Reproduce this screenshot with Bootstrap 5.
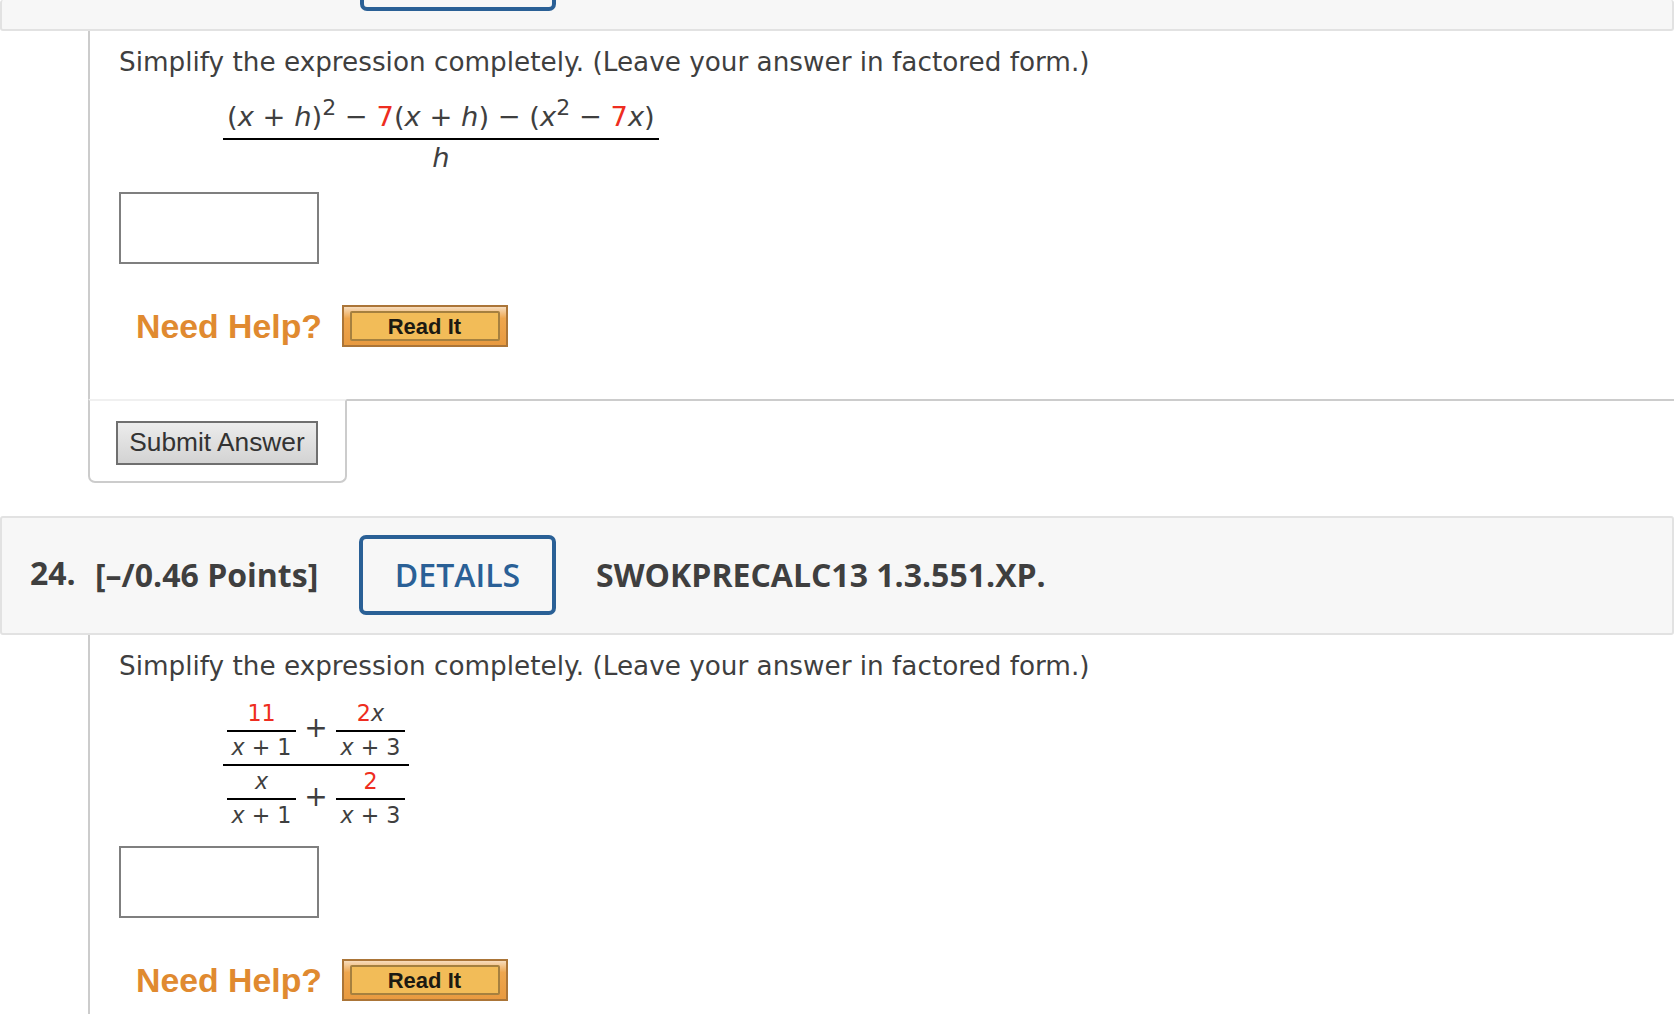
<!DOCTYPE html>
<html lang="en">
<head>
    <meta charset="UTF-8">
    <meta name="viewport" content="width=device-width, initial-scale=1.0">
    <title>Simplify the expression</title>
    <link href="https://cdn.jsdelivr.net/npm/bootstrap@5.3.0/dist/css/bootstrap.min.css" rel="stylesheet">
    <style>
        html, body { height: 1014px; overflow: hidden; background: #fff; }
        body { font-family: "DejaVu Sans", Verdana, sans-serif; color: #3f3f3f; }
        .q-head { background: #f7f7f7; border: 2px solid #e2e2e2; border-radius: 3px; font-family: "Open Sans", sans-serif; font-weight: 700; color: #3f3f3f; }
        .q-head-cut { height: 31px; overflow: hidden; border-top: 0; padding-left: 358px; padding-bottom: 18px; }
        .q-head-cut .q-details { width: 196px; }
        .q-head-full { height: 119px; padding: 0 0 1px 28px; font-size: 32px; }
        .q-num { width: 65px; position: relative; top: -2px; }
        .q-details { width: 197px; height: 80px; flex: none; border: 4px solid #2a6096; border-radius: 7px; color: #2a6096; font-weight: 600; font-size: 32px; text-decoration: none; }
        .q-points { width: 264px; }
        .q-code { margin-left: 40px; }
        .q-body { margin-left: 88px; border-left: 2px solid #ccc; padding: 15px 0 60px 29px; }
        .q-body-first { padding-bottom: 52px; }
        .q-text { font-size: 26.27px; line-height: 32px; margin: 0; }
        .math { color: #3f3f3f; font-size: 27.35px; }
        .math i { font-style: oblique; }
        .math .red { color: #ee2d20; }
        .frac { display: inline-flex; flex-direction: column; align-items: stretch; text-align: center; }
        .frac-num { border-bottom: 2px solid #000; padding: 0 4px; white-space: nowrap; }
        .frac-den { padding: 0 4px; white-space: nowrap; }
        .math-big { margin: 18px 0 0 104px; height: 77px; }
        .math-big .frac-num { line-height: 38px; height: 42px; }
        .math-big .frac-den { line-height: 35px; }
        .math-big sup { font-size: 22px; top: -.5em; line-height: 0; vertical-align: baseline; position: relative; }
        .math-stack { margin: 17px 0 0 104px; height: 128px; width: fit-content; font-size: 22.2px; }
        .math-stack .frac-lvl { display: flex; padding: 0 4px; }
        .math-stack .outer-num { border-bottom: 2px solid #000; height: 67px; align-items: flex-start; }
        .math-stack .outer-den { height: 61px; padding-top: 1px; align-items: flex-start; }
        .math-stack .frac { width: 69px; }
        .math-stack .frac-num { line-height: 29px; height: 33px; padding: 0; }
        .math-stack .frac-den { line-height: 31px; padding: 0; }
        .plus { width: 40px; text-align: center; font-size: 28px; line-height: 1; }
        .outer-num .plus { margin-top: 15px; }
        .outer-den .plus { margin-top: 16px; }
        .ans-box { display: block; width: 200px; height: 72px; border: 2px solid #7f7f7f; border-radius: 0; background: #fff; margin-top: 19px; }
        .help-row { margin: 41px 0 0 17px; }
        .help-label { font-family: "Liberation Sans", Arial, sans-serif; font-weight: 700; font-size: 33.8px; color: #e08a30; margin-right: 20px; line-height: 42px; }
        .read-it { width: 166px; height: 42px; padding: 4px 6px; border: 2px solid #ab7538; background: linear-gradient(#f7dcbc 0, #eea64e 30%, #e89a40 100%); }
        .read-inner { height: 100%; padding-right: 1px; background: #f2bc58; border: 2px solid #a5803f; border-radius: 2px; font-family: "Liberation Sans", Arial, sans-serif; font-weight: 700; font-size: 22px; color: #1c1a12; }
        .q-foot { margin: 0 0 33px 88px; }
        .foot-tab { width: 259px; height: 84px; border: 2px solid #ccc; border-top-color: #f0f0f0; border-radius: 0 0 7px 7px; padding: 20px 0 0 26px; }
        .foot-rest { border-top: 2px solid #ccc; }
        .submit-btn { width: 202px; height: 44px; border: 2px solid #6f6f6f; border-radius: 0; background: linear-gradient(#ececec, #d3d3d3); font-family: "Liberation Sans", Arial, sans-serif; font-size: 26.3px; line-height: 1; color: #333; padding: 0 0 2px; }
    </style>
</head>
<body>

<!-- Question 23, scrolled mostly out of view -->
<div class="q-head q-head-cut d-flex align-items-end">
    <span class="q-details d-block"></span>
</div>
<div class="q-body q-body-first">
    <p class="q-text">Simplify the expression completely. (Leave your answer in factored form.)</p>
    <div class="math math-big">
        <span class="frac">
            <span class="frac-num">(<i>x</i> + <i>h</i>)<sup>2</sup> &minus; <span class="red">7</span>(<i>x</i> + <i>h</i>) &minus; (<i>x</i><sup>2</sup> &minus; <span class="red">7</span><i>x</i>)</span>
            <span class="frac-den"><i>h</i></span>
        </span>
    </div>
    <input type="text" class="ans-box" aria-label="Answer">
    <div class="help-row d-flex align-items-center">
        <span class="help-label">Need Help?</span>
        <div class="read-it"><div class="read-inner d-flex align-items-center justify-content-center">Read It</div></div>
    </div>
</div>
<div class="q-foot d-flex">
    <div class="foot-tab">
        <button type="button" class="submit-btn">Submit Answer</button>
    </div>
    <div class="foot-rest flex-grow-1"></div>
</div>

<!-- Question 24 -->
<div class="q-head q-head-full d-flex align-items-center">
    <span class="q-num">24.</span>
    <span class="q-points">[&ndash;/0.46 Points]</span>
    <a class="q-details d-flex align-items-center justify-content-center" href="#">DETAILS</a>
    <span class="q-code">SWOKPRECALC13 1.3.551.XP.</span>
</div>
<div class="q-body">
    <p class="q-text">Simplify the expression completely. (Leave your answer in factored form.)</p>
    <div class="math math-stack d-flex flex-column">
        <div class="frac-lvl outer-num">
            <span class="frac"><span class="frac-num"><span class="red">11</span></span><span class="frac-den"><i>x</i> + 1</span></span>
            <span class="plus">+</span>
            <span class="frac"><span class="frac-num"><span class="red">2</span><i>x</i></span><span class="frac-den"><i>x</i> + 3</span></span>
        </div>
        <div class="frac-lvl outer-den">
            <span class="frac"><span class="frac-num"><i>x</i></span><span class="frac-den"><i>x</i> + 1</span></span>
            <span class="plus">+</span>
            <span class="frac"><span class="frac-num"><span class="red">2</span></span><span class="frac-den"><i>x</i> + 3</span></span>
        </div>
    </div>
    <input type="text" class="ans-box" aria-label="Answer">
    <div class="help-row d-flex align-items-center">
        <span class="help-label">Need Help?</span>
        <div class="read-it"><div class="read-inner d-flex align-items-center justify-content-center">Read It</div></div>
    </div>
</div>

<script src="https://cdn.jsdelivr.net/npm/bootstrap@5.3.0/dist/js/bootstrap.bundle.min.js"></script>
</body>
</html>
